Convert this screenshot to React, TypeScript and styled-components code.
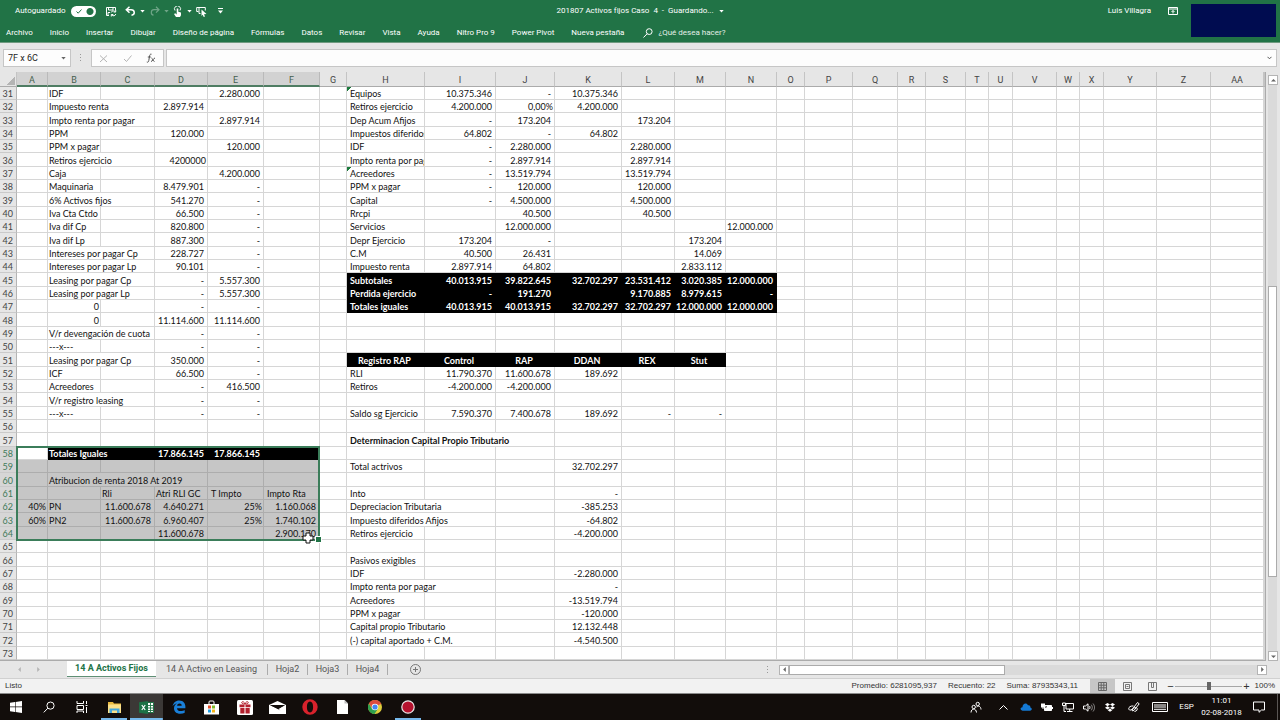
import React from "react";
import styled, { createGlobalStyle, css } from "styled-components";

const ui = `Roboto, "Open Sans", "Liberation Sans", sans-serif`;
const sheetFont = `Lato, "Open Sans", "Liberation Sans", sans-serif`;
const green = "#217346";

const GlobalStyle = createGlobalStyle`
  * { box-sizing: border-box; }
  body { margin: 0; background: #e6e6e6; font: 8px/12px ${ui}; color: #262626; font-variant-ligatures: none; }
  button, input { font: inherit; color: inherit; margin: 0; padding: 0; border: 0; background: none; border-radius: 0; outline: 0; }
  svg { display: block; flex: none; }
`;

const Page = styled.div`
  display: flex;
  flex-direction: column;
  min-height: 100vh;
`;

/* ---------- Ribbon ---------- */

const Ribbon = styled.header`
  position: relative;
  background: ${green};
  border-bottom: 1px solid #6f9a80;
  color: #fff;
`;

const TitleBar = styled.div`
  display: grid;
  grid-template-columns: 1fr auto 1fr;
  align-items: center;
  height: 22px;
  padding: 0 102px 0 15px;
`;

const QuickAccess = styled.div`
  display: flex;
  align-items: center;
  gap: 4px;
`;

const AutoSave = styled.label`
  display: flex;
  align-items: center;
  gap: 5px;
  margin-right: 5px;
`;

const Switch = styled.input`
  appearance: none;
  width: 25px;
  height: 11px;
  border-radius: 6px;
  background:
    radial-gradient(circle at 19px 50%, ${green} 3px, transparent 4px),
    #fff;
`;

const SwitchBox = styled.span`
  display: grid;
  > * { grid-area: 1 / 1; align-self: center; }
  > svg { margin-left: 5px; pointer-events: none; }
`;

const IconButton = styled.button<{ $dim?: boolean }>`
  display: flex;
  align-items: center;
  gap: 4px;
  opacity: ${(p) => (p.$dim ? 0.35 : 1)};
`;

const SaveButton = styled(IconButton)`
  margin-right: 4px;
`;

const DocTitle = styled.button`
  display: flex;
  align-items: center;
  gap: 5px;
  white-space: pre;
  margin-left: 87px;
`;

const Account = styled.div`
  display: flex;
  align-items: center;
  justify-content: flex-end;
  gap: 17px;
`;

const Menu = styled.nav`
  display: flex;
  align-items: center;
  gap: 17px;
  height: 20px;
  padding: 1px 6px 0;
  white-space: nowrap;
`;

const Search = styled.label`
  display: flex;
  align-items: center;
  gap: 5px;
  margin-left: 2px;
  input { width: 90px; }
  input::placeholder { color: #e3efe7; opacity: 1; }
`;

const Redacted = styled.div`
  position: absolute;
  top: 4px;
  right: 4px;
  width: 85px;
  height: 33px;
  background: #000c50;
`;

/* ---------- Formula bar ---------- */

const FormulaBar = styled.div`
  display: flex;
  align-items: stretch;
  height: 29px;
  padding: 6px 3px 5px;
  background: #e6e6e6;
`;

const FieldBox = styled.div<{ $width?: number }>`
  display: flex;
  align-items: center;
  ${(p) => (p.$width ? `width: ${p.$width}px; flex: none;` : "flex: 1;")}
  background: #fdfdfd;
  border: 1px solid #c6c6c6;
  padding: 0 4px;
  font-size: 9px;
  input { flex: 1; min-width: 0; }
`;

const Grip = styled.div`
  display: flex;
  align-items: center;
  justify-content: center;
  width: 20px;
`;

const FormulaTools = styled(FieldBox)`
  justify-content: space-between;
  padding: 0 7px;
  margin-right: 2px;
`;

/* ---------- Sheet ---------- */

const Main = styled.main`
  display: flex;
  flex: 1;
`;

const SheetPane = styled.div`
  position: relative;
  flex: 1;
  min-width: 0;
  overflow: hidden;
  background: #fff;
  border-right: 1px solid #ababab;
  border-bottom: 1px solid #ababab;
`;

const Grid = styled.table`
  table-layout: fixed;
  border-collapse: separate;
  border-spacing: 0;
  width: 100%;
  font: 9px/11px ${sheetFont};
  color: #111;
`;

const ColHead = styled.th<{ $on?: boolean }>`
  height: 15px;
  padding: 3px 0 0;
  vertical-align: top;
  font: 400 9px/10px ${ui};
  color: #444;
  background: #e6e6e6;
  border-right: 1px solid #c4c4c4;
  border-bottom: 1px solid #ababab;
  ${(p) => p.$on && css`
    background: #d2d2d2;
    color: #44604f;
    border-right-color: #bababa;
    border-bottom: 2px solid #4f7d63;
  `}
`;

const Corner = styled.th`
  padding: 0;
  background: linear-gradient(135deg, transparent 50%, #b4b4b4 50%) 7px 5px / 8px 8px no-repeat #e6e6e6;
  border-right: 1px solid #c4c4c4;
  border-bottom: 1px solid #ababab;
`;

const Row = styled.tr<{ $h: number }>`
  height: ${(p) => p.$h}px;
`;

const RowHead = styled.th<{ $on?: boolean }>`
  padding: 1px 3px 0 0;
  text-align: right;
  font-weight: 400;
  color: ${(p) => (p.$on ? "#3f7a59" : "#444")};
  background: ${(p) => (p.$on ? "#d6d6d6" : "#e6e6e6")};
  border-right: 1px solid ${(p) => (p.$on ? green : "#b4b4b4")};
  border-bottom: 1px solid #cacaca;
`;

type Fill = "none" | "black" | "selected";

const Cell = styled.td<{ $align: string; $fill: Fill; $bold?: boolean; $flush?: boolean; $indent?: boolean; $flag?: boolean }>`
  padding: 1px ${(p) => (p.$flush ? 1 : 3)}px 0 ${(p) => (p.$indent ? 3 : 1)}px;
  ${(p) => p.$align === "left" && "padding-right: 0;"}
  text-align: ${(p) => p.$align};
  white-space: nowrap;
  overflow: hidden;
  font-weight: ${(p) => (p.$bold ? 700 : 400)};
  border-right: 1px solid #d6d6d6;
  border-bottom: 1px solid #d6d6d6;
  ${(p) => p.$fill === "black" && "background: #000; color: #fff; border-color: #000;"}
  ${(p) => p.$fill === "selected" && "background: #c6c6c6; border-color: #adadad;"}
  ${(p) => p.$flag && "background: linear-gradient(135deg, #1b7a3c 3px, transparent 3px);"}
`;

const Selection = styled.div`
  position: absolute;
  top: 374px;
  left: 16px;
  width: 304px;
  height: 95px;
  border: 2px solid #3b7d5a;
  pointer-events: none;
  &::after {
    content: "";
    position: absolute;
    right: -4px;
    bottom: -4px;
    width: 5px;
    height: 5px;
    background: ${green};
    border: 1px solid #fff;
  }
`;

const Pointer = styled.svg`
  position: absolute;
  top: 460px;
  left: 302px;
`;

const VScroll = styled.div`
  display: flex;
  flex-direction: column;
  width: 14px;
  padding: 3px 3px 0 2px;
  background: #e6e6e6;
`;

const VTrack = styled.div`
  display: flex;
  flex-direction: column;
  flex: 1;
  background: #dadada;
`;

const Space = styled.div<{ $grow: number }>`
  flex: ${(p) => p.$grow} 0 0;
`;

const Thumb = styled.div<{ $grow: number }>`
  flex: ${(p) => p.$grow} 0 0;
  background: #fff;
  border: 1px solid #ababab;
`;

const ArrowButton = styled.button`
  display: flex;
  align-items: center;
  justify-content: center;
  flex: none;
  width: 10px;
  height: 10px;
  background: #fff;
  border: 1px solid #b4b4b4;
`;

/* ---------- Tabs ---------- */

const TabBar = styled.div`
  display: flex;
  align-items: center;
  height: 18px;
  background: #e6e6e6;
  border-bottom: 1px solid #d0d0d0;
  font-size: 9px;
`;

const TabArrows = styled.div`
  display: flex;
  align-items: center;
  gap: 14px;
  width: 67px;
  padding-left: 17px;
`;

const Tab = styled.button<{ $active?: boolean; $width: number }>`
  width: ${(p) => p.$width}px;
  height: 11px;
  line-height: 11px;
  white-space: nowrap;
  color: #555;
  border-right: 1px solid #ababab;
  ${(p) => p.$active && css`
    align-self: flex-start;
    height: 16px;
    line-height: 15px;
    color: ${green};
    font-weight: 700;
    background: #fff;
    border: 0;
    border-bottom: 1px solid #5f8f75;
  `}
`;

const AddTab = styled.button`
  margin-left: 22px;
`;

const ScrollGrip = styled.div`
  margin-left: auto;
  margin-right: 10px;
`;

const HScroll = styled.div`
  display: flex;
  align-items: stretch;
  width: 488px;
  height: 10px;
  margin-right: 13px;
  background: #dadada;
`;

/* ---------- Status bar ---------- */

const StatusBar = styled.footer`
  display: flex;
  align-items: center;
  height: 15px;
  padding: 0 5px;
  background: #f2f2f2;
  border-bottom: 1px solid #8a8a8a;
  color: #333;
  font-family: "Liberation Sans", Arial, sans-serif;
`;

const Stats = styled.div`
  display: flex;
  gap: 11px;
  margin-left: auto;
  margin-right: 12px;
`;

const ViewButton = styled.button<{ $on?: boolean }>`
  display: flex;
  align-items: center;
  justify-content: center;
  width: 25px;
  height: 14px;
  background: ${(p) => (p.$on ? "#c6c6c6" : "transparent")};
`;

const ZoomGroup = styled.div`
  display: flex;
  align-items: center;
  margin-left: 1px;
`;

const ZoomButton = styled.button`
  width: 9px;
  font-size: 11px;
  line-height: 12px;
  text-align: center;
`;

const ZoomRange = styled.input`
  appearance: none;
  width: 67px;
  height: 9px;
  background: linear-gradient(#a6a6a6, #a6a6a6) 0 4px / 100% 1px no-repeat;
  &::-webkit-slider-thumb {
    appearance: none;
    width: 4px;
    height: 8px;
    background: #666;
  }
`;

const ZoomValue = styled.span`
  width: 24px;
  text-align: right;
`;

/* ---------- Taskbar ---------- */

const Taskbar = styled.div`
  display: flex;
  justify-content: space-between;
  height: 26px;
  background: #120d0b;
  color: #fff;
`;

const Apps = styled.div`
  display: grid;
  grid-template-columns: repeat(13, 1fr);
  width: 424px;
`;

const AppButton = styled.button<{ $state?: "open" | "active" }>`
  display: flex;
  align-items: center;
  justify-content: center;
  ${(p) => p.$state && css`
    background: linear-gradient(#76b9ed, #76b9ed) center bottom / ${p.$state === "active" ? "100%" : "26px"} 2px no-repeat
      ${p.$state === "active" ? "#3b3836" : "transparent"};
  `}
`;

const Tray = styled.div`
  display: grid;
  grid-template-columns: 30px 24px repeat(4, 21px) 22px 26px 26px 27px 43px 31px 3px 3px;
`;

const TrayButton = styled.button`
  display: flex;
  align-items: center;
  justify-content: center;
`;

const Clock = styled.time`
  display: flex;
  flex-direction: column;
  justify-content: center;
  text-align: center;
`;

const ShowDesktop = styled.button`
  grid-column: 14;
  border-left: 1px solid #5a5654;
`;

/* ---------- Data ---------- */

const columns: [string, number][] = [
  ["A", 31], ["B", 53], ["C", 54], ["D", 53], ["E", 56], ["F", 56], ["G", 27], ["H", 78], ["I", 71],
  ["J", 59], ["K", 67], ["L", 53], ["M", 51], ["N", 51], ["O", 28], ["P", 48], ["Q", 45], ["R", 28],
  ["S", 40], ["T", 23], ["U", 24], ["V", 44], ["W", 23], ["X", 24], ["Y", 53], ["Z", 54], ["AA", 53],
];
const names = columns.map(([n]) => n);

/* A value is plain text, or text with the number of columns it runs over. */
type Value = string | [string, number];

const data: Record<number, Record<string, Value>> = {
  31: { B: "IDF", E: "2.280.000", H: "Equipos", I: "10.375.346", J: "-", K: "10.375.346" },
  32: { B: ["Impuesto renta", 2], D: "2.897.914", H: "Retiros ejercicio", I: "4.200.000", J: "0,00%", K: "4.200.000" },
  33: { B: ["Impto renta por pagar", 2], E: "2.897.914", H: "Dep Acum Afijos", I: "-", J: "173.204", L: "173.204" },
  34: { B: "PPM", D: "120.000", H: "Impuestos diferidos", I: "64.802", J: "-", K: "64.802" },
  35: { B: "PPM x pagar", E: "120.000", H: "IDF", I: "-", J: "2.280.000", L: "2.280.000" },
  36: { B: ["Retiros ejercicio", 2], D: "4200000", H: "Impto renta por pagar", I: "-", J: "2.897.914", L: "2.897.914" },
  37: { B: "Caja", E: "4.200.000", H: "Acreedores", I: "-", J: "13.519.794", L: "13.519.794" },
  38: { B: "Maquinaria", D: "8.479.901", E: "-", H: "PPM x pagar", I: "-", J: "120.000", L: "120.000" },
  39: { B: ["6% Activos fijos", 2], D: "541.270", E: "-", H: "Capital", I: "-", J: "4.500.000", L: "4.500.000" },
  40: { B: "Iva Cta Ctdo", D: "66.500", E: "-", H: "Rrcpi", J: "40.500", L: "40.500" },
  41: { B: "Iva dif Cp", D: "820.800", E: "-", H: "Servicios", J: "12.000.000", N: "12.000.000" },
  42: { B: "Iva dif Lp", D: "887.300", E: "-", H: "Depr Ejercicio", I: "173.204", J: "-", M: "173.204" },
  43: { B: ["Intereses por pagar Cp", 2], D: "228.727", E: "-", H: "C.M", I: "40.500", J: "26.431", M: "14.069" },
  44: { B: ["Intereses por pagar Lp", 2], D: "90.101", E: "-", H: "Impuesto renta", I: "2.897.914", J: "64.802", M: "2.833.112" },
  45: { B: ["Leasing por pagar Cp", 2], D: "-", E: "5.557.300", H: "Subtotales", I: "40.013.915", J: "39.822.645", K: "32.702.297", L: "23.531.412", M: "3.020.385", N: "12.000.000" },
  46: { B: ["Leasing por pagar Lp", 2], D: "-", E: "5.557.300", H: "Perdida ejercicio", I: "-", J: "191.270", L: "9.170.885", M: "8.979.615", N: "-" },
  47: { B: "0", D: "-", E: "-", H: "Totales iguales", I: "40.013.915", J: "40.013.915", K: "32.702.297", L: "32.702.297", M: "12.000.000", N: "12.000.000" },
  48: { B: "0", D: "11.114.600", E: "11.114.600" },
  49: { B: ["V/r devengación de cuota", 2], D: "-", E: "-" },
  50: { B: "---x---", D: "-", E: "-" },
  51: { B: ["Leasing por pagar Cp", 2], D: "350.000", E: "-", H: "Registro RAP", I: "Control", J: "RAP", K: "DDAN", L: "REX", M: "Stut" },
  52: { B: "ICF", D: "66.500", E: "-", H: "RLI", I: "11.790.370", J: "11.600.678", K: "189.692" },
  53: { B: "Acreedores", D: "-", E: "416.500", H: "Retiros", I: "-4.200.000", J: "-4.200.000" },
  54: { B: ["V/r registro leasing", 2], D: "-", E: "-" },
  55: { B: "---x---", D: "-", E: "-", H: "Saldo sg Ejercicio", I: "7.590.370", J: "7.400.678", K: "189.692", L: "-", M: "-" },
  57: { H: ["Determinacion Capital Propio Tributario", 3] },
  58: { B: ["Totales Iguales", 2], D: "17.866.145", E: "17.866.145" },
  59: { H: "Total actrivos", K: "32.702.297" },
  60: { B: ["Atribucion de renta 2018 At 2019", 3] },
  61: { C: "Rli", D: "Atri RLI GC", E: "T Impto", F: "Impto Rta", H: "Into", K: "-" },
  62: { A: "40%", B: "PN", C: "11.600.678", D: "4.640.271", E: "25%", F: "1.160.068", H: ["Depreciacion Tributaria", 2], K: "-385.253" },
  63: { A: "60%", B: "PN2", C: "11.600.678", D: "6.960.407", E: "25%", F: "1.740.102", H: ["Impuesto diferidos Afijos", 2], K: "-64.802" },
  64: { D: "11.600.678", F: "2.900.170", H: "Retiros ejercicio", K: "-4.200.000" },
  66: { H: "Pasivos exigibles" },
  67: { H: "IDF", K: "-2.280.000" },
  68: { H: ["Impto renta por pagar", 2], K: "-" },
  69: { H: "Acreedores", K: "-13.519.794" },
  70: { H: "PPM x pagar", K: "-120.000" },
  71: { H: ["Capital propio Tributario", 2], K: "12.132.448" },
  72: { H: ["(-) capital aportado + C.M.", 2], K: "-4.540.500" },
};

const rows = Array.from({ length: 43 }, (_, i) => 31 + i);
const isNumber = (t: string) => /^(-|-?[\d.,]+%?)$/.test(t);

function fillOf(r: number, c: number): Fill {
  if (r >= 45 && r <= 47 && c >= 7 && c <= 13) return "black";
  if (r === 51 && c >= 7 && c <= 12) return "black";
  if (r === 58 && c >= 1 && c <= 5) return "black";
  if (r >= 59 && r <= 64 && c <= 5) return "selected";
  return "none";
}

function SheetRow({ r }: { r: number }) {
  const values = data[r] ?? {};
  const cells: React.ReactNode[] = [];
  for (let c = 0; c < names.length; ) {
    const v = values[names[c]];
    const text = Array.isArray(v) ? v[0] : v ?? "";
    const span = Array.isArray(v) ? v[1] : 1;
    const fill = fillOf(r, c);
    const heading = r === 51 && c >= 7;
    cells.push(
      <Cell
        key={c}
        colSpan={span}
        $fill={fill}
        $align={heading ? "center" : isNumber(text) ? "right" : "left"}
        $bold={fill === "black" || (r === 57 && c === 7)}
        $flush={text.endsWith("%") || text === "4200000" || text === "0"}
        $indent={(c === 7 && !heading) || (r === 61 && c >= 4)}
        $flag={c === 7 && (r === 31 || r === 37)}
      >
        {text}
      </Cell>,
    );
    c += span;
  }
  return (
    <Row $h={(r - 31) % 3 === 2 ? 14 : 13}>
      <RowHead scope="row" $on={r >= 58 && r <= 64}>{r}</RowHead>
      {cells}
      <Cell $align="left" $fill="none" />
    </Row>
  );
}

/* ---------- Drawings ---------- */

const Caret = ({ color = "currentColor" }: { color?: string }) => (
  <svg width="5" height="3" viewBox="0 0 5 3"><path d="M.3 0h4.400L2.500 2.600z" fill={color} /></svg>
);

const arrows = {
  up: "M0 3.5h5L2.5 1z",
  down: "M0 1.5h5L2.5 4z",
  left: "M3.8 0v5L1.2 2.5z",
  right: "M1.2 0v5L3.8 2.5z",
};
const Arrow = ({ dir, color = "#666" }: { dir: keyof typeof arrows; color?: string }) => (
  <svg width="5" height="5" viewBox="0 0 5 5"><path d={arrows[dir]} fill={color} /></svg>
);

const Dots = () => (
  <svg width="2" height="8" viewBox="0 0 2 8" fill="#999">
    <path d="M0 0h1v1H0zM0 3h1v1H0zM0 6h1v1H0z" />
  </svg>
);

const Line = ({ w, h = w, d, color = "#fff", sw = 1 }: { w: number; h?: number; d: string; color?: string; sw?: number }) => (
  <svg width={w} height={h} viewBox={`0 0 ${w} ${h}`} fill="none" stroke={color} strokeWidth={sw}><path d={d} /></svg>
);

const menu = ["Archivo", "Inicio", "Insertar", "Dibujar", "Diseño de página", "Fórmulas", "Datos", "Revisar", "Vista", "Ayuda", "Nitro Pro 9", "Power Pivot", "Nueva pestaña"];

const tabs: [string, number][] = [["14 A Activos Fijos", 89], ["14 A Activo en Leasing", 112], ["Hoja2", 40], ["Hoja3", 40], ["Hoja4", 40]];

const apps: { name: string; state?: "open" | "active"; icon: React.ReactNode }[] = [
  { name: "Inicio", icon: (
    <svg width="12" height="12" viewBox="0 0 12 12" fill="#fff"><path d="M0 1.7 5 1v4.6H0zM5.6.9 12 0v5.6H5.6zM0 6.3h5V11l-5-.7zM5.6 6.3H12V12l-6.4-.9z" /></svg>) },
  { name: "Buscar", icon: <Line w={12} d="M7.5 1a3.6 3.6 0 1 1 0 7.2a3.6 3.6 0 0 1 0-7.2M4.8 7.2 .8 11.4" /> },
  { name: "Vista de tareas", icon: <Line w={12} d="M1 0v2.500h6.500V0M1 4.500h6.500v4H1zM1 12v-2h6.500v2M10.500 0v3M10.500 6v6M9.500 4.500h2" /> },
  { name: "Explorador", state: "open", icon: (
    <svg width="15" height="13" viewBox="0 0 15 13"><path d="M1 1h5l1 1.5h7V12H1z" fill="#e9b93f" /><path d="M1 3.5h13V12H1z" fill="#fbe08a" /><path d="M2.5 12V7.5h10V12H10V9.5H5V12z" fill="#45a7dc" /></svg>) },
  { name: "Excel", state: "active", icon: (
    <svg width="15" height="13" viewBox="0 0 15 13"><path d="M8 1.5h6.5v10H8z" fill="#fff" stroke="#217346" /><path d="M9 4.5h5M9 7h5M9 9.5h5M11.5 2v9" stroke="#217346" strokeWidth=".9" /><path d="M0 1.2 9 0v13l-9-1.2z" fill="#1d7145" /><path d="m2.8 4 3.4 5M6.2 4 2.8 9" stroke="#fff" strokeWidth="1.2" /></svg>) },
  { name: "Edge", icon: (
    <svg width="14" height="14" viewBox="0 0 14 14"><path d="M.6 6.300C1.200 2.600 3.700.4 7.200.4c4.200 0 6.200 3 6.200 6.300v1.500H5c.1 2 1.700 2.900 3.800 2.900 1.500 0 2.900-.4 3.900-1v2.700c-1.200.6-2.700.9-4.500.9C4.400 13.700 2 11.500 2 8.200c0-2 1.100-3.800 2.900-4.700C3 3.700 1.400 4.800.6 6.300zM5.100 5.700h4.600c0-1.500-.8-2.300-2.200-2.300-1.300 0-2.200.9-2.400 2.300z" fill="#1a7fd8" /></svg>) },
  { name: "Tienda", icon: (
    <svg width="15" height="15" viewBox="0 0 15 15"><path d="M5 4V2a1 1 0 0 1 1-1h3a1 1 0 0 1 1 1v2" fill="none" stroke="#fff" /><path d="M0 4h15v10.500H0z" fill="#fff" /><path d="M4 5.500h3v3H4z" fill="#e5502b" /><path d="M8 5.500h3v3H8z" fill="#7db928" /><path d="M4 9.500h3v3H4z" fill="#1f9fe6" /><path d="M8 9.500h3v3H8z" fill="#f6b61a" /></svg>) },
  { name: "Regalos", icon: (
    <svg width="16" height="15" viewBox="0 0 16 15"><rect width="16" height="15" rx="1.500" fill="#fff" /><path d="M2.500 4.500h5v2.700h-5zM8.500 4.500h5v2.700h-5zM3.300 8h4.200v5.500H3.300zM8.500 8h4.200v5.500H8.500z" fill="#b31f2d" /><path d="M8 4C5.500 4 4.300 3.300 4.800 2.200 5.500 1 7.500 2 8 4c.5-2 2.500-3 3.200-1.800C11.700 3.300 10.500 4 8 4z" fill="none" stroke="#b31f2d" /></svg>) },
  { name: "Correo", icon: (
    <svg width="17" height="13" viewBox="0 0 17 13"><path d="M0 4 8.500 0 17 4v9H0z" fill="#fff" /><path d="M1 4h15L9.500 8 11.500 9.500z" fill="#120d0b" /><path d="M1 4.200 9 7.800 16 4.200z" fill="#120d0b" /></svg>) },
  { name: "Opera", icon: (
    <svg width="16" height="16" viewBox="0 0 16 16"><path fillRule="evenodd" d="M8 .3a7.700 7.700 0 1 0 0 15.400A7.700 7.700 0 0 0 8 .3zm0 2.200c2 0 3.100 2.400 3.100 5.500S10 13.500 8 13.500 4.900 11.100 4.900 8 6 2.500 8 2.500z" fill="#d8222c" /></svg>) },
  { name: "Documento", icon: (
    <svg width="11" height="14" viewBox="0 0 11 14"><path d="M0 0h7.500L11 3.500V14H0z" fill="#fff" /><path d="M7.500 0v3.500H11" fill="#bbb" /></svg>) },
  { name: "Chrome", icon: (
    <svg width="14" height="14" viewBox="0 0 14 14"><circle cx="7" cy="7" r="7" fill="#e0cf3c" /><path d="M7 7 .9 3.500A7 7 0 0 1 13.100 3.500z" fill="#dd4b3e" /><path d="M.9 3.500A7 7 0 0 0 6.500 14L10 8.700 4 8.700z" fill="#2da04e" /><path d="M.9 3.500h12.200L13.400 4.200H7L4.200 8.500z" fill="#dd4b3e" /><circle cx="7" cy="7" r="3.300" fill="#fff" /><circle cx="7" cy="7" r="2.600" fill="#4285f4" /></svg>) },
  { name: "Grabador", state: "open", icon: (
    <svg width="14" height="14" viewBox="0 0 14 14"><circle cx="7" cy="7" r="6.200" fill="#b5122e" stroke="#e8e8e8" strokeWidth="1.200" /></svg>) },
];

const tray: { name: string; icon: React.ReactNode }[] = [
  { name: "Contactos", icon: <Line w={12} d="M7.700 1.300a1.700 1.700 0 1 1 0 3.400a1.700 1.700 0 0 1 0-3.400M3.700 4.300a1.700 1.700 0 1 1 0 3.400a1.700 1.700 0 0 1 0-3.400M1 11.500c.2-4.500 5.200-4.500 5.500 0M6.500 6c1.800-1.800 4.300-.8 4.500 2.500" /> },
  { name: "Iconos ocultos", icon: <Line w={9} h={5} d="M.5 4.500l4-4 4 4" /> },
  { name: "OneDrive", icon: (
    <svg width="12" height="8" viewBox="0 0 12 8"><path d="M2.500 7.700C-.3 7.300.2 4 2.500 4.200 2.300 1 6.300-1 8 2.200c2-.4 2.600 1.300 2.300 2.200C12.500 4.800 12.300 7.700 10 7.700z" fill="#1479d4" /></svg>) },
  { name: "Batería", icon: (
    <svg width="12" height="9" viewBox="0 0 12 9"><path d="M3.500 2.500h7v5h-7z" fill="#fff" stroke="#fff" /><path d="M11 4h1v2h-1zM0 1h4v3.500H2.500V6h-1V4.500H0zM.5 0h1v1h-1zM2.500 0h1v1h-1z" fill="#fff" /><path d="M4.500 3.300h1.500L5 5h-.5z" fill="#120d0b" /></svg>) },
  { name: "Red", icon: <Line w={12} h={10} d="M4 1.500h7.500v5.500H4zM5 9.500h5.500M7.700 7v2.500M.5 1h3v2.500h-3zM2 3.500V9.500H4" /> },
  { name: "Volumen", icon: (
    <svg width="12" height="9" viewBox="0 0 12 9" fill="none" stroke="#fff"><path d="M.5 3h2L5 .8v7.400L2.500 6h-2z" /><path d="M6.500 3c.6 1 .6 2 0 3" /><path d="M8.300 1.700c1.300 1.800 1.300 3.800 0 5.600M10 .5c2 2.500 2 5.500 0 8" opacity=".5" /></svg>) },
  { name: "Dropbox", icon: (
    <svg width="10" height="9" viewBox="0 0 10 9" fill="#fff"><path d="M2.500 0 5 1.600 2.500 3.200 0 1.600zM7.500 0 10 1.600 7.500 3.200 5 1.600zM2.500 3.200 5 4.800 2.500 6.400 0 4.800zM7.500 3.200 10 4.800 7.500 6.400 5 4.800zM5 5.600l2.300 1.600L5 8.800 2.700 7.200z" /></svg>) },
  { name: "Lápiz", icon: <Line w={12} d="M4.500 8 9.500 1.500l1.700 1.300L6.200 9.200 4.200 9.900zM5.500 5c-4-.5-6 2.500-4 4 2 1 3.500-2.500 6-2.500s2.500 3.500-1 4" /> },
  { name: "Teclado", icon: <Line w={16} h={10} d="M.5.5h15v9H.5zM2 3h12M2 5h12M2 7.300h12" /> },
];

export default function App() {
  return (
    <Page>
      <GlobalStyle />
      <Ribbon>
        <TitleBar>
          <QuickAccess>
            <AutoSave>
              Autoguardado
              <SwitchBox>
                <Switch type="checkbox" role="switch" defaultChecked />
                <Line w={6} h={5} d="M.5 2.500l1.700 1.700L5.500 .5" color={green} />
              </SwitchBox>
            </AutoSave>
            <SaveButton aria-label="Guardar">
              <Line w={12} h={11} d="M4 9.500H1.500v-8h9V4M3.500 1.500V4H8V1.500M3 9V6.500h2M6.200 6.500a2.300 2.300 0 0 1 4-.8M10.700 4v2h-2M10.800 8a2.300 2.300 0 0 1-4 1M6.300 10.500v-2h2" />
            </SaveButton>
            <IconButton aria-label="Deshacer">
              <Line w={11} h={10} d="M4.500 .8 1.300 3.700l3.200 3M1.600 3.700H6c4 0 4.500 5 .5 5.500" sw={1.500} /><Caret />
            </IconButton>
            <IconButton aria-label="Rehacer" $dim>
              <Line w={11} h={10} d="M7 .8 10 3.700l-3 3M9.700 3.700H5C1.500 3.700 1.500 8.700 4.500 9.200" sw={1.200} /><Caret />
            </IconButton>
            <IconButton aria-label="Modo mouse o táctil">
              <svg width="10" height="11" viewBox="0 0 10 11"><path d="M2 4.500a3 3 0 1 1 5 0" fill="none" stroke="#fff" /><path d="M3.700 2.500h1.600v3.300L8 6.500v2.700L7 11H3L1 8l1.200-.7 1.500 1.200z" fill="#fff" /></svg>
              <Caret />
            </IconButton>
            <IconButton aria-label="Seleccionar objetos">
              <svg width="11" height="11" viewBox="0 0 11 11"><path d="M2.500 5.500H.7v-4h8.600v3M3 1.500v6M3 7.500h1.500" fill="none" stroke="#fff" /><path d="M5.500 3.500 10.500 8 8 8.200 9 10.500 7.700 11 6.700 8.700 5.500 10z" fill="#fff" /></svg>
            </IconButton>
            <IconButton aria-label="Personalizar barra">
              <svg width="12" height="6" viewBox="0 0 12 6"><path d="M7 0h5v1H7zM7 2.500h5L9.500 5.500z" fill="#fff" /></svg>
            </IconButton>
          </QuickAccess>
          <DocTitle>{"201807 Activos fijos Caso  4  -  Guardando..."}<Caret /></DocTitle>
          <Account>
            <span>Luis Villagra</span>
            <Line w={10} h={8} d="M.5.5h9v7h-9zM.5 2h9M5 6.500V3.500M3.500 5 5 3.500 6.500 5" />
          </Account>
        </TitleBar>
        <Menu>
          {menu.map((m) => <button key={m}>{m}</button>)}
          <Search>
            <Line w={10} d="M6.200.7a2.900 2.900 0 1 1 0 5.800a2.900 2.900 0 0 1 0-5.800M4.200 5.700.5 9.500" />
            <input type="text" aria-label="Buscar comandos" placeholder="¿Qué desea hacer?" />
          </Search>
        </Menu>
        <Redacted />
      </Ribbon>

      <FormulaBar>
        <FieldBox $width={68}>
          <input type="text" aria-label="Cuadro de nombres" defaultValue="7F x 6C" />
          <Caret color="#666" />
        </FieldBox>
        <Grip><Dots /></Grip>
        <FormulaTools $width={73}>
          <button aria-label="Cancelar"><Line w={9} h={9} d="M1 1.500l7 6.500M8 1.500 1 8" color="#b4b4b4" /></button>
          <button aria-label="Introducir"><Line w={9} h={9} d="M1 5l2.500 2.500L8.500 1.500" color="#b4b4b4" /></button>
          <button aria-label="Insertar función">
            <Line w={10} h={10} d="M5.500 1.200C4 .8 3.700 2 3.400 4L2.800 7.500C2.600 9 1.800 9.500.8 9M1.800 4h3M5.500 5c1 0 1.500 3.500 3 3.500M9 5C7.500 5 6.500 8.500 5 8.500" color="#555" />
          </button>
        </FormulaTools>
        <FieldBox>
          <input type="text" aria-label="Barra de fórmulas" />
          <Line w={5} h={4} d="M.5 .8l2 2 2-2" color="#555" />
        </FieldBox>
      </FormulaBar>

      <Main>
        <SheetPane>
          <Grid>
            <colgroup>
              <col width={17} />
              {columns.map(([n, w]) => <col key={n} width={w} />)}
              <col />
            </colgroup>
            <thead>
              <tr>
                <Corner />
                {names.map((n, i) => <ColHead key={n} scope="col" $on={i < 6}>{n}</ColHead>)}
                <ColHead />
              </tr>
            </thead>
            <tbody>
              {rows.map((r) => <SheetRow key={r} r={r} />)}
            </tbody>
          </Grid>
          <Selection />
          <Pointer width="12" height="12" viewBox="0 0 12 12">
            <path d="M4 1h4v3h3v4H8v3H4V8H1V4h3z" fill="#fff" stroke="#111" />
          </Pointer>
        </SheetPane>
        <VScroll>
          <ArrowButton aria-label="Arriba"><Arrow dir="up" /></ArrowButton>
          <VTrack>
            <Space $grow={202} />
            <Thumb $grow={290} />
            <Space $grow={74} />
          </VTrack>
          <ArrowButton aria-label="Abajo"><Arrow dir="down" /></ArrowButton>
        </VScroll>
      </Main>

      <TabBar>
        <TabArrows>
          <Arrow dir="left" color="#b4b4b4" />
          <Arrow dir="right" color="#b4b4b4" />
        </TabArrows>
        {tabs.map(([t, w], i) => <Tab key={t} $width={w} $active={i === 0}>{t}</Tab>)}
        <AddTab aria-label="Hoja nueva">
          <Line w={11} d="M5.500.5a5 5 0 1 1 0 10a5 5 0 0 1 0-10M5.500 3v5M3 5.500h5" color="#777" />
        </AddTab>
        <ScrollGrip><Dots /></ScrollGrip>
        <HScroll>
          <ArrowButton aria-label="Izquierda"><Arrow dir="left" /></ArrowButton>
          <Thumb $grow={215} />
          <Space $grow={253} />
          <ArrowButton aria-label="Derecha"><Arrow dir="right" /></ArrowButton>
        </HScroll>
      </TabBar>

      <StatusBar>
        <span>Listo</span>
        <Stats>
          <span>Promedio: 6281095,937</span>
          <span>Recuento: 22</span>
          <span>Suma: 87935343,11</span>
        </Stats>
        <ViewButton $on aria-label="Normal"><Line w={9} d="M.5.5h8v8h-8zM3.200.5v8M5.800.5v8M.5 3.200h8M.5 5.800h8" color="#666" /></ViewButton>
        <ViewButton aria-label="Diseño de página"><Line w={9} d="M.5.5h8v8h-8zM2.500 2.500h4v4h-4zM3.500 4.500h2" color="#777" /></ViewButton>
        <ViewButton aria-label="Saltos de página"><Line w={9} d="M.5.5h8v8h-8zM3.500.5v5M5.500.5v5M3.500 5.500h2" color="#777" /></ViewButton>
        <ZoomGroup>
          <ZoomButton aria-label="Alejar">−</ZoomButton>
          <ZoomRange type="range" aria-label="Zoom" min={10} max={190} defaultValue={100} />
          <ZoomButton aria-label="Acercar">+</ZoomButton>
          <ZoomValue>100%</ZoomValue>
        </ZoomGroup>
      </StatusBar>

      <Taskbar>
        <Apps>
          {apps.map((a) => <AppButton key={a.name} aria-label={a.name} $state={a.state}>{a.icon}</AppButton>)}
        </Apps>
        <Tray>
          {tray.map((t) => <TrayButton key={t.name} aria-label={t.name}>{t.icon}</TrayButton>)}
          <TrayButton>ESP</TrayButton>
          <Clock><span>11:01</span><span>02-08-2018</span></Clock>
          <TrayButton aria-label="Notificaciones"><Line w={12} h={12} d="M.5 1h11v8H8.500L6 11.300 6 9H.5z" /></TrayButton>
          <ShowDesktop aria-label="Mostrar escritorio" />
        </Tray>
      </Taskbar>
    </Page>
  );
}
